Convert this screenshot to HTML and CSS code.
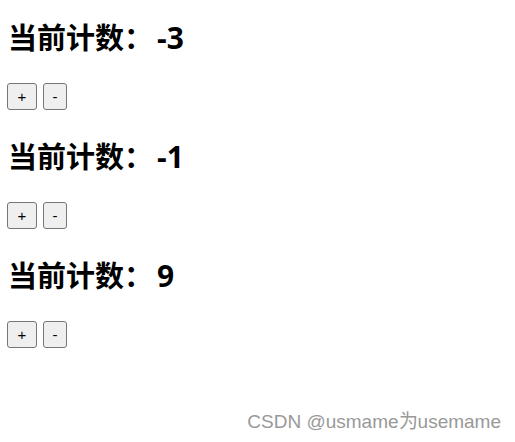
FILE: index.html
```html
<!DOCTYPE html>
<html lang="zh-CN">
<head>
    <meta charset="UTF-8">
    <meta name="viewport" content="width=device-width, initial-scale=1.0">
    <title>计数器</title>
    <link rel="stylesheet" href="styles.css">
</head>
<body>
    <div class="counter">
        <h1>当前计数：<span class="count">-3</span></h1>
        <div class="actions">
            <button>+</button>
            <button>-</button>
        </div>
    </div>
    <div class="counter">
        <h1>当前计数：<span class="count">-1</span></h1>
        <div class="actions">
            <button>+</button>
            <button>-</button>
        </div>
    </div>
    <div class="counter">
        <h1>当前计数：<span class="count">9</span></h1>
        <div class="actions">
            <button>+</button>
            <button>-</button>
        </div>
    </div>

    <div class="watermark">CSDN @usmame为usemame</div>
</body>
</html>
```

FILE: styles.css
```css
body {
    margin: 0;
    padding: 0 8px;
    font-family: "Noto Sans CJK SC", "Noto Sans", sans-serif;
    color: #000;
    background-color: #fff;
}
h1 {
    font-size: 29px;
    line-height: 38px;
    height: 38px;
    font-weight: bold;
    margin: 26px 0 28px;
}
.counter:first-child h1 {
    margin-top: 17px;
}
.count {
    font-family: "Open Sans", "Noto Sans", sans-serif;
    font-size: 30px;
    line-height: 1;
    font-weight: 700;
    margin-left: 4px;
}
.actions {
    display: flex;
    gap: 6px;
    margin-left: -1px;
}
button {
    font-family: "Liberation Sans", Arial, sans-serif;
    font-size: 15px;
    height: 27px;
    padding: 0 8px;
    min-width: 24px;
    color: #000;
    background-color: #efefef;
    border: 1px solid #767676;
    border-radius: 3px;
}
.actions button:first-child {
    width: 30px;
}
.watermark {
    position: absolute;
    right: 14px;
    bottom: 9px;
    font-family: "Liberation Sans", Arial, sans-serif;
    font-size: 19px;
    color: #999;
}
```
